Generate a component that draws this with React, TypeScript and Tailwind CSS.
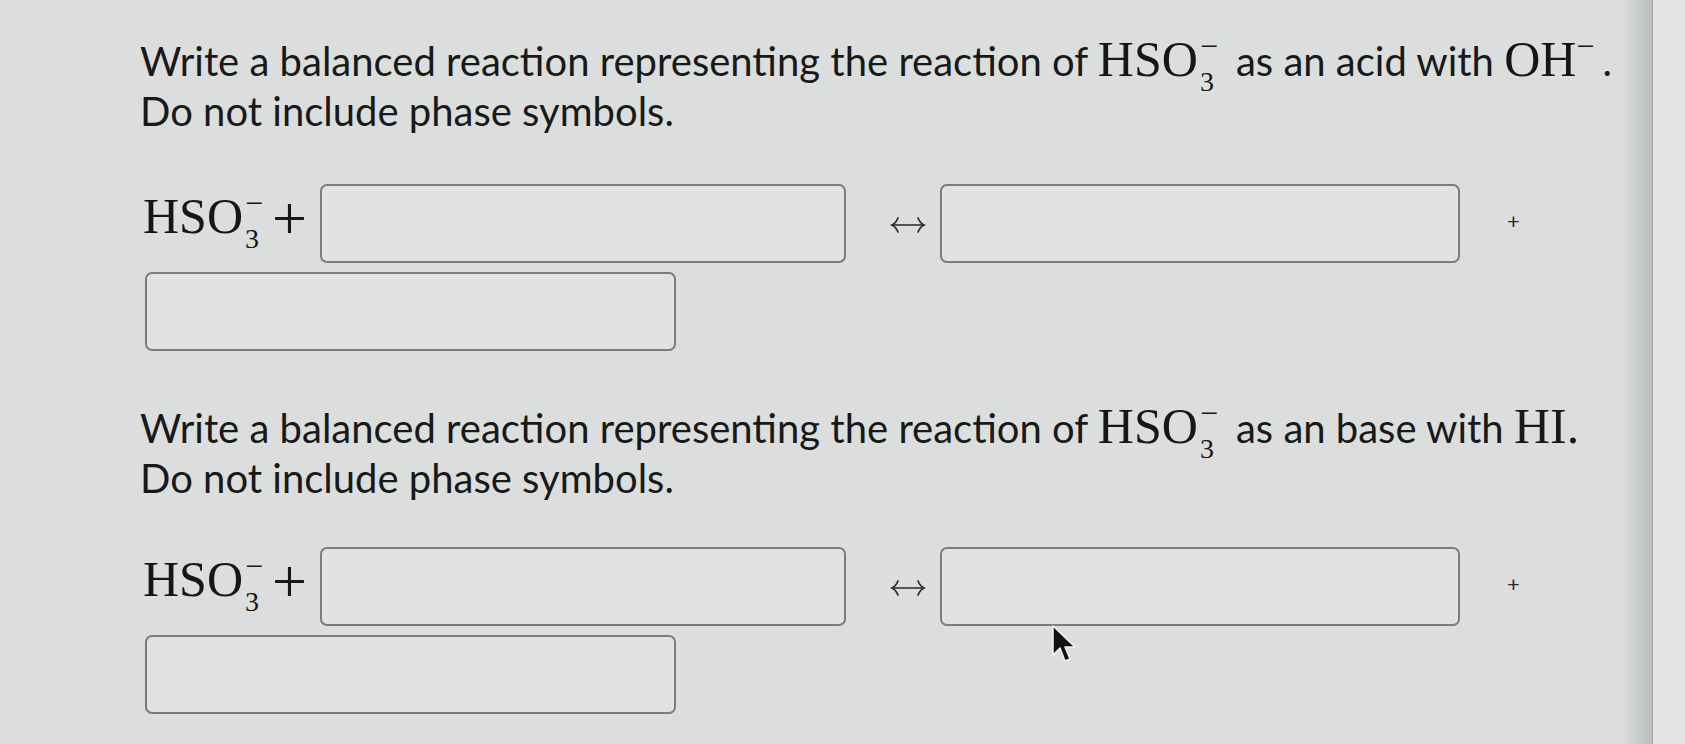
import React from "react";

const sans = "font-['Lato','Noto_Sans',sans-serif]";
const serif = "font-['Liberation_Serif','Times_New_Roman',serif]";

// HSO3 with stacked charge and subscript; the column is kept short so the line box does not grow
function Hso3() {
  return (
    <span className={`inline-flex items-start ${serif} text-[50px] leading-[40px] text-[#161616]`}>
      <span>HSO</span>
      <span className="ml-[2px] flex h-[40px] flex-col items-start">
        <span className="-mt-[3px] h-[20px] shrink-0 text-[32px] leading-[20px]">−</span>
        <span className="mt-[12px] h-[27px] shrink-0 text-[28px] leading-[27px]">3</span>
      </span>
    </span>
  );
}

function Oh() {
  return (
    <span className={`inline-flex items-start ${serif} text-[50px] leading-[40px] text-[#161616]`}>
      <span>OH</span>
      <span className="-mt-[3px] h-[20px] text-[32px] leading-[20px]">−</span>
    </span>
  );
}

function Arrow() {
  return (
    <svg width="36" height="20" viewBox="0 0 36 20" fill="none" stroke="#2a2a2a" strokeWidth="1.7" strokeLinecap="round">
      <path d="M2 10 H34" />
      <path d="M8 3 Q6 8 2 10 Q6 12 8 17" />
      <path d="M28 3 Q30 8 34 10 Q30 12 28 17" />
    </svg>
  );
}

function Box({ w }: { w: string }) {
  return <div className={`${w} h-[79px] shrink-0 rounded-[7px] border-2 border-[#7b7d7c] bg-[#e1e2e1]`} />;
}

function Equation() {
  return (
    <div>
      <div className="flex items-start">
        <div className="mt-[12px] flex w-[180px] shrink-0 items-start pl-[3px]">
          <Hso3 />
          <span className={`${serif} -mt-[9px] ml-[9px] text-[62px] leading-[62px] text-[#161616]`}>+</span>
        </div>
        <Box w="w-[526px]" />
        <div className="ml-[44px] mt-[31px]">
          <Arrow />
        </div>
        <div className="ml-[14px]">
          <Box w="w-[520px]" />
        </div>
        <span className={`${sans} ml-[47px] mt-[26px] text-[22px] leading-[22px] text-[#2a2a2a]`}>+</span>
      </div>
      <div className="mt-[9px] pl-[5px]">
        <Box w="w-[531px]" />
      </div>
    </div>
  );
}

export default function App() {
  return (
    <div className="relative flex h-[744px] w-full overflow-hidden bg-[#dcdedd]">
      <main className={`${sans} flex-1 pl-[140px] pt-[36px] text-[40px] leading-[50px] text-[#181919]`}>
        <p>
          Write a balanced reaction representing the reaction of <Hso3 />
          <span className="ml-[18px]">as an acid with </span>
          <Oh />
          <span className="ml-[8px]">.</span>
          <br />
          Do not include phase symbols.
        </p>
        <div className="mt-[48px]">
          <Equation />
        </div>

        <p className="mt-[52px]">
          Write a balanced reaction representing the reaction of <Hso3 />
          <span className="ml-[18px]">as an base with </span>
          <span className={`${serif} text-[50px] leading-[40px]`}>HI.</span>
          <br />
          Do not include phase symbols.
        </p>
        <div className="mt-[44px]">
          <Equation />
        </div>
      </main>

      <div className="w-[30px] shrink-0 bg-gradient-to-r from-[#dcdedd] to-[#b9bdbd]" />
      <div className="w-[33px] shrink-0 border-l border-[#9ea3a3] bg-[#e2e3e2]" />

      {/* mouse pointer */}
      <svg className="absolute left-[1052px] top-[625px]" width="26" height="40" viewBox="0 0 26 40">
        <path d="M1 1 L1 30 L8 23 L13 36 L18 34 L13 22 L23 22 Z" fill="#111" stroke="#f2f2f2" strokeWidth="1.5" strokeLinejoin="round" />
      </svg>
    </div>
  );
}
